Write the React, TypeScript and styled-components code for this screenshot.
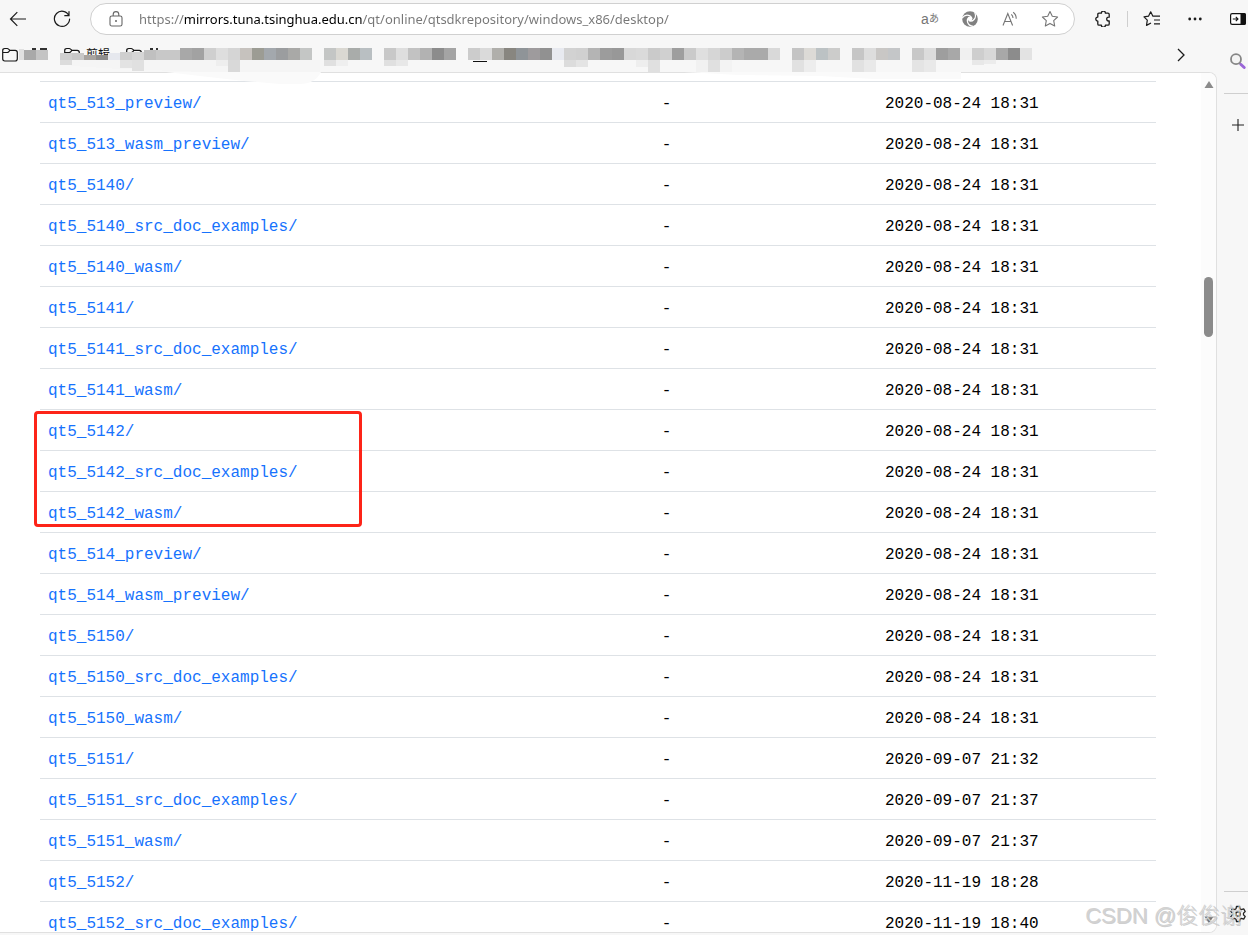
import React from 'react';
import styled, { createGlobalStyle } from 'styled-components';

const GlobalStyle = createGlobalStyle`
  * { box-sizing: border-box; }
  body { margin: 0; background: #f7f7f7; font-family: "Open Sans", "Noto Sans CJK SC", sans-serif; }
  button { border: 0; padding: 0; background: none; font: inherit; color: inherit; }
`;

const Browser = styled.div`
  position: relative;
  display: grid;
  grid-template-columns: minmax(0, 1fr) 31px;
  height: 100vh;
  overflow: hidden;
`;

const Main = styled.div`
  display: flex;
  flex-direction: column;
  min-width: 0;
  min-height: 0;
`;

const Toolbar = styled.header`
  display: flex;
  align-items: center;
  height: 38px;
  flex: none;
`;

const IconButton = styled.button<{ $width?: number; $color?: string }>`
  display: flex;
  align-items: center;
  justify-content: center;
  flex: none;
  width: ${(p) => p.$width ?? 40}px;
  height: 32px;
  color: ${(p) => p.$color ?? '#1b1b1b'};
  svg { display: block; }
`;

const AddressBar = styled.div`
  display: flex;
  align-items: center;
  flex: 1;
  min-width: 0;
  height: 32px;
  margin: 0 8px 0 2px;
  padding: 0 4px 0 5px;
  background: #fff;
  border: 1px solid #d0d0d0;
  border-radius: 16px;
`;

const UrlInput = styled.input`
  flex: 1;
  min-width: 0;
  height: 24px;
  margin-left: 3px;
  padding: 0;
  border: 0;
  outline: 0;
  font: 13px "Noto Sans", sans-serif;
  color: transparent;
  background: linear-gradient(to right, #767676 45px, #000 45px 223px, #767676 223px);
  background-clip: text;
  -webkit-background-clip: text;
`;

const Glyph = styled.span<{ $size: number }>`
  font-family: "Liberation Sans", "Noto Sans CJK JP", sans-serif;
  font-size: ${(p) => p.$size}px;
  line-height: 20px;
`;

const Separator = styled.span`
  width: 1px;
  height: 16px;
  margin: 0 4px;
  background: #cfcfcf;
`;

const Bookmarks = styled.nav`
  position: relative;
  display: flex;
  align-items: center;
  height: 34px;
  flex: none;
`;

const Bookmark = styled.a`
  display: flex;
  align-items: center;
  gap: 6px;
  width: 62px;
  padding-left: 2px;
  color: #111;
  font-size: 12px;
  line-height: 16px;
  text-decoration: none;
`;

const Mosaic = styled.svg`
  position: absolute;
  left: 0;
  top: 0;
  z-index: 1;
  overflow: visible;
  pointer-events: none;
`;

const More = styled.div`
  display: flex;
  margin-left: auto;
  padding-right: 16px;
`;

const Page = styled.main`
  display: flex;
  flex: 1;
  min-height: 0;
  margin-bottom: 2px;
  overflow: hidden;
  background: #fff;
  border: 1px solid #e0e0e0;
  border-left: 0;
  border-radius: 0 8px 8px 0;
`;

const Listing = styled.div`
  flex: 1;
  min-width: 0;
  overflow: hidden;
  padding: 8px 45px 0 40px;
`;

const TableArea = styled.div`
  position: relative;
`;

const Table = styled.table`
  width: 100%;
  table-layout: fixed;
  border-collapse: separate;
  border-spacing: 0;
  font: 16px/24px "Liberation Mono", monospace;
  color: #000;
`;

const Cell = styled.td<{ $width: string }>`
  width: ${(p) => p.$width};
  padding: 10px 8px 6px;
  border-top: 1px solid #dee2e6;
  white-space: nowrap;
`;

const FileLink = styled.a`
  color: #1672fd;
  text-decoration: none;
`;

const ROW = 41;

const Highlight = styled.div<{ $from: number; $rows: number }>`
  position: absolute;
  left: -6px;
  top: ${(p) => p.$from * ROW + 2}px;
  width: 328px;
  height: ${(p) => p.$rows * ROW - 7}px;
  border: 3px solid #fd2418;
  border-radius: 4px;
  pointer-events: none;
`;

const Scrollbar = styled.div`
  display: flex;
  flex-direction: column;
  align-items: center;
  width: 15px;
  flex: none;
  padding: 8px 0;
  background: #fcfcfc;
`;

const Arrow = styled.svg`
  display: block;
  flex: none;
`;

const Gap = styled.div<{ $grow: number }>`
  flex: ${(p) => p.$grow} 1 0;
`;

const Thumb = styled.div`
  width: 9px;
  height: 60px;
  flex: none;
  border-radius: 5px;
  background: #8b8b8b;
`;

const Sidebar = styled.aside`
  display: flex;
  flex-direction: column;
  padding-left: 7px;
`;

const SideButton = styled(IconButton)<{ $height: number }>`
  width: 28px;
  height: ${(p) => p.$height}px;
`;

const SideLine = styled.div<{ $space?: number }>`
  height: 1px;
  flex: none;
  margin-top: ${(p) => p.$space ?? 0}px;
  background: #cfcfcf;
`;

const Watermark = styled.div`
  position: absolute;
  right: 6px;
  bottom: 3px;
  z-index: 2;
  font: 22px/32px "Liberation Sans", "Noto Sans CJK SC", sans-serif;
  font-weight: 300;
  color: #d2d2d2;
  text-shadow: 1px 1px 0 rgba(160, 160, 160, 0.5);
  white-space: nowrap;
  pointer-events: none;
`;

const D = '2020-08-24 18:31';
const files: [string, string][] = [
  ['qt5_513_preview/', D],
  ['qt5_513_wasm_preview/', D],
  ['qt5_5140/', D],
  ['qt5_5140_src_doc_examples/', D],
  ['qt5_5140_wasm/', D],
  ['qt5_5141/', D],
  ['qt5_5141_src_doc_examples/', D],
  ['qt5_5141_wasm/', D],
  ['qt5_5142/', D],
  ['qt5_5142_src_doc_examples/', D],
  ['qt5_5142_wasm/', D],
  ['qt5_514_preview/', D],
  ['qt5_514_wasm_preview/', D],
  ['qt5_5150/', D],
  ['qt5_5150_src_doc_examples/', D],
  ['qt5_5150_wasm/', D],
  ['qt5_5151/', '2020-09-07 21:32'],
  ['qt5_5151_src_doc_examples/', '2020-09-07 21:37'],
  ['qt5_5151_wasm/', '2020-09-07 21:37'],
  ['qt5_5152/', '2020-11-19 18:28'],
  ['qt5_5152_src_doc_examples/', '2020-11-19 18:40'],
];

// Runs of 12px tiles: starting x, then one colour per tile.
const upperTiles: [number, string][] = [
  [24, 'a9a9a9 c4c4c4'],
  [60, 'cfcfcf c8c8c8 a8a4a0 8d8d8d e6e8ee cfcfcf d6d6d6 c0c0c0 c8c8c8 c8c8c8 a8a8a8 a2a2a2 cfcfcf dedede d5d5d5 c6c2be 9c9c94 a3a8ad 9b9d9f a9a9a7 c4c6c5'],
  [324, 'c4c6c5 dad8d2 a9acaa b9bfc2'],
  [384, 'c8c8c8 dedede c2c2c2 b2b2b2 8c8c8c a4a4a4'],
  [468, 'cccccc dadada b0afab 888680 8f9498 9e9b9d 919191 e8eaf0 d2d2d2 d0d0d0 b4b4b4 9c9c9c 989898 d8d8d8 dadada cacaca d0d0d0 9e9e9e cacaca dfdfdf d6d6d6 cccccc b4b4b4 aaaaaa aaaaaa d9d9d9'],
  [792, 'c4c4c4 dcdad6 bcc2c4 cccccb'],
  [852, 'c6c6c6 dddddd c9c7c5 c4c6c8'],
  [912, 'c8c8c8 dcdcdc 9e9e9e a8a8a8 f0f0f0 cecece d8d8d8 a8a8a8 8c8c8c e3e3e3'],
];
// Single tiles of the fainter row below: x, height, colour.
const lowerTiles: [number, number, string][] = [
  [60, 5, 'dcdcdc'], [120, 8, 'e3e3e3'], [132, 11, 'e0e0e0'], [216, 6, 'eeeeee'], [228, 12, 'd9d9d9'],
  [324, 6, 'e0e0e0'], [336, 6, 'efefef'], [384, 6, 'e0e0e0'], [396, 6, 'e8e8e8'],
  [564, 7, 'dcdcdc'], [576, 7, 'e4e4e4'], [636, 7, 'eeeeee'], [648, 12, 'e0e0e0'],
  [696, 12, 'f1f1f1'], [708, 12, 'e0e0e0'], [720, 12, 'f3f3f3'],
  [792, 12, 'e1e1e1'], [804, 12, 'ededed'], [852, 12, 'e1e1e1'], [864, 12, 'e9e9e9'],
  [912, 12, 'e4e4e4'], [924, 12, 'e9e9e9'], [972, 5, 'e8e8e8'], [984, 4, 'ececec'],
];

function topOf(x: number) {
  if (x < 60) return 12;
  if (x < 84) return 15;
  if (x < 108) return 17;
  if (x < 120) return 15;
  if (x < 144) return 14;
  if (x < 180) return 12;
  return 10;
}

function TileStrip() {
  return (
    <Mosaic width="1040" height="34" viewBox="0 0 1040 34" aria-hidden="true" shapeRendering="crispEdges">
      <rect x="19" y="11" width="5" height="11" fill="#e0e0e0" />
      <path d="M32 10H36V12H32ZM40 10H47V12H40Z" fill="#333" />
      <path d="M60 22H320V34H205L120 31L72 28Z" fill="#f5f5f5" />
      {upperTiles.map(([start, colors]) =>
        colors.split(' ').map((c, i) => {
          const x = start + i * 12;
          const y = topOf(x);
          return <rect key={x} x={x} y={y} width="12" height={22 - y} fill={`#${c}`} />;
        }),
      )}
      {lowerTiles.map(([x, h, c]) => (
        <rect key={x} x={x} y="22" width="12" height={h} fill={`#${c}`} />
      ))}
      <path d="M150 10H153V12H150ZM156 10H158V12H156Z" fill="#333" />
      <rect x="473" y="23" width="14" height="1" fill="#111" />
      <path d="M166 34H321Q315 46 300 46H280L244 43L200 38Z" fill="#fafafa" shapeRendering="auto" />
      <path d="M684 34H961V41H874L820 38L738 37Z" fill="#fafafa" shapeRendering="auto" />
    </Mosaic>
  );
}

const Folder = () => (
  <svg width="16" height="16" viewBox="0 0 16 16" fill="none" stroke="#161616" strokeWidth="1.2">
    <path d="M.7 3.6Q.7 1.5 2.8 1.5H5.2Q6 1.5 6.6 2.1L8 3.4H13.2Q15.3 3.4 15.3 5.5V11.8Q15.3 14 13.2 14H2.8Q.7 14 .7 11.8ZM.7 5.5H5.2Q6 5.5 6.6 4.8L8 3.4" />
  </svg>
);

export default function App() {
  return (
    <>
      <GlobalStyle />
      <Browser>
        <Main>
          <Toolbar>
            <IconButton $width={36} aria-label="Back">
              <svg width="18" height="16" viewBox="0 0 18 16" fill="none" stroke="currentColor" strokeWidth="1.2">
                <path d="M17 8H1.5M8.3 1.2L1.5 8L8.3 14.8" />
              </svg>
            </IconButton>
            <IconButton $width={52} aria-label="Refresh">
              <svg width="18" height="18" viewBox="0 0 18 18" fill="none" stroke="currentColor" strokeWidth="1.2" strokeLinecap="round">
                <path d="M15.9 5.6A7.6 7.6 0 1 0 16.6 9M16 1.6V5.7H11.8" />
              </svg>
            </IconButton>
            <AddressBar>
              <IconButton $color="#666" aria-label="Site information">
                <svg width="14" height="16" viewBox="0 0 14 16" fill="none" stroke="currentColor" strokeWidth="1.1">
                  <rect x="1" y="5" width="12" height="10" rx="1.8" />
                  <path d="M4.2 5V3.4A2.8 2.8 0 0 1 9.8 3.4V5" />
                  <circle cx="7" cy="10" r="1" fill="currentColor" stroke="none" />
                </svg>
              </IconButton>
              <UrlInput
                aria-label="Address"
                defaultValue="https://mirrors.tuna.tsinghua.edu.cn/qt/online/qtsdkrepository/windows_x86/desktop/"
              />
              <IconButton $color="#757575" aria-label="Translate">
                <Glyph $size={14}>a</Glyph>
                <Glyph $size={10}>あ</Glyph>
              </IconButton>
              <IconButton $color="#808080" aria-label="Browser essentials">
                <svg width="16" height="16" viewBox="0 0 16 16" fill="none">
                  <circle cx="8" cy="8" r="7.8" fill="currentColor" />
                  <circle cx="8" cy="8" r="2.2" fill="#fff" />
                  <g stroke="#fff" strokeWidth="1.2">
                    <path d="M0 7.2Q2.6 3.4 6.4 4.3Q9.6 5 10 8" />
                    <path d="M0 7.2Q2.6 3.4 6.4 4.3Q9.6 5 10 8" transform="rotate(120 8 8)" />
                    <path d="M0 7.2Q2.6 3.4 6.4 4.3Q9.6 5 10 8" transform="rotate(240 8 8)" />
                  </g>
                </svg>
              </IconButton>
              <IconButton $color="#757575" aria-label="Read aloud">
                <svg width="18" height="16" viewBox="0 0 18 16" fill="none" stroke="currentColor" strokeWidth="1.1">
                  <path d="M2 14.5L6.8 2.5L11.6 14.5M3.6 10.5H10M10.3 3.3Q12 4.8 12 7M12.2 1.3Q15.4 3.8 15.2 7.8" />
                </svg>
              </IconButton>
              <IconButton $color="#757575" aria-label="Add to favourites">
                <svg width="18" height="18" viewBox="0 0 18 18" fill="none" stroke="currentColor" strokeWidth="1.1" strokeLinejoin="round">
                  <path d="M9 1.5L11.3 6.3L16.6 7L12.7 10.7L13.7 16L9 13.4L4.3 16L5.3 10.7L1.4 7L6.7 6.3Z" />
                </svg>
              </IconButton>
            </AddressBar>
            <IconButton aria-label="Extensions">
              <svg width="16" height="16" viewBox="0 0 16 16" fill="none" stroke="currentColor" strokeWidth="1.3" strokeLinejoin="round">
                <path d="M4 2.2H6.4A2 2 0 0 1 10.4 2.2H12.9Q14.2 2.2 14.2 3.5V6.2H13.6A1.9 1.9 0 0 0 13.6 10H14.2V12.9Q14.2 14.2 12.9 14.2H10.4A2 2 0 0 1 6.4 14.2H4Q2.8 14.2 2.8 12.9V10.1A2 2 0 0 1 2.8 6.1V3.5Q2.8 2.2 4 2.2Z" />
              </svg>
            </IconButton>
            <Separator />
            <IconButton aria-label="Favourites">
              <svg width="18" height="18" viewBox="0 0 18 18" fill="none" stroke="currentColor" strokeWidth="1.2" strokeLinejoin="round">
                <path d="M12 6.2H9.9L7.7 1.8L5.5 6.2L1 6.9L4.3 10.2L3.5 15.4L8 13M10 6.2H17M11 10H17M11 13.8H17" />
              </svg>
            </IconButton>
            <IconButton $width={45} aria-label="Settings and more">
              <svg width="14" height="4" viewBox="0 0 14 4" fill="currentColor">
                <circle cx="1.7" cy="2" r="1.4" />
                <circle cx="7" cy="2" r="1.4" />
                <circle cx="12.3" cy="2" r="1.4" />
              </svg>
            </IconButton>
          </Toolbar>
          <Bookmarks aria-label="Bookmarks">
            <Bookmark href="#" aria-label="Folder"><Folder /></Bookmark>
            <Bookmark href="#"><Folder />剪辑</Bookmark>
            <Bookmark href="#" aria-label="Folder"><Folder /></Bookmark>
            <TileStrip />
            <More>
              <IconButton aria-label="More bookmarks">
                <svg width="10" height="14" viewBox="0 0 10 14" fill="none" stroke="currentColor" strokeWidth="1.3">
                  <path d="M2 1L8 7L2 13" />
                </svg>
              </IconButton>
            </More>
          </Bookmarks>
          <Page>
            <Listing>
              <TableArea>
                <Table>
                  <tbody>
                    {files.map(([name, date]) => (
                      <tr key={name}>
                        <Cell $width="55%"><FileLink href="#">{name}</FileLink></Cell>
                        <Cell $width="20%">-</Cell>
                        <Cell $width="25%">{date}</Cell>
                      </tr>
                    ))}
                  </tbody>
                </Table>
                <Highlight $from={8} $rows={3} />
              </TableArea>
            </Listing>
            <Scrollbar>
              <Arrow width="10" height="8" viewBox="0 0 10 8"><path d="M5 0L9.5 7H.5Z" fill="#8b8b8b" /></Arrow>
              <Gap $grow={188} />
              <Thumb />
              <Gap $grow={580} />
              <Arrow width="10" height="8" viewBox="0 0 10 8"><path d="M5 7.5L9.5 .5H.5Z" fill="#777" /></Arrow>
            </Scrollbar>
          </Page>
        </Main>
        <Sidebar>
          <SideButton $height={38} aria-label="Hide sidebar">
            <svg width="16" height="12" viewBox="0 0 16 12">
              <rect x=".6" y=".6" width="14.8" height="10.8" rx="1.6" fill="#fff" stroke="#111" strokeWidth="1.2" />
              <path d="M10.5 0H14Q16 0 16 2V10Q16 12 14 12H10.5Z" fill="#111" />
              <path d="M2.8 6H8M5.8 3.8L8 6L5.8 8.2" fill="none" stroke="#111" strokeWidth="1.1" />
            </svg>
          </SideButton>
          <SideButton $height={46} aria-label="Search">
            <svg width="18" height="18" viewBox="0 0 18 18" fill="none">
              <circle cx="7" cy="7.2" r="5" fill="#f4f4f4" stroke="#868686" strokeWidth="1.8" />
              <path d="M10.5 11L12.3 12.8" stroke="#868686" strokeWidth="1.8" />
              <path d="M12 12.5L15.2 15.5" stroke="#9a66d8" strokeWidth="3" strokeLinecap="round" />
            </svg>
          </SideButton>
          <SideLine $space={9} />
          <SideButton $height={62} aria-label="Customize sidebar">
            <svg width="12" height="12" viewBox="0 0 12 12" stroke="#222" strokeWidth="1.1"><path d="M6 0V12M0 6H12" /></svg>
          </SideButton>
          <Gap $grow={1} />
          <SideLine />
          <SideButton $height={43} aria-label="Settings">
            <svg width="18" height="18" viewBox="0 0 18 18" fill="none" stroke="#222" strokeWidth="1.3" strokeLinejoin="round">
              <path d="M7.5 1.5H10.5L11 3.8L12.4 4.6L14.7 3.9L16.2 6.5L14.5 8.1V9.9L16.2 11.5L14.7 14.1L12.4 13.4L11 14.2L10.5 16.5H7.5L7 14.2L5.6 13.4L3.3 14.1L1.8 11.5L3.5 9.9V8.1L1.8 6.5L3.3 3.9L5.6 4.6L7 3.8Z" />
              <circle cx="9" cy="9" r="2.2" />
            </svg>
          </SideButton>
        </Sidebar>
        <Watermark>CSDN @俊俊谢</Watermark>
      </Browser>
    </>
  );
}
